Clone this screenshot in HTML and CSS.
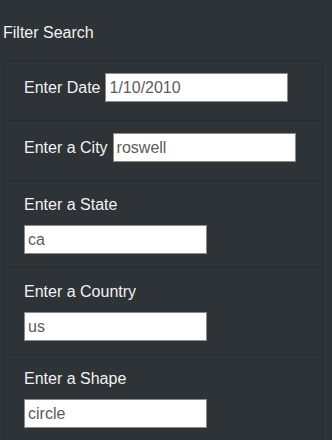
FILE: index.html
```html
<!DOCTYPE html>
<html lang="en">
<head>
<meta charset="utf-8">
<title>Filter Search</title>
<link rel="stylesheet" href="styles.css">
</head>
<body>
<div class="panel">
  <div class="title">Filter Search</div>
  <ul class="filters">
    <li class="item inline">
      <label class="label" for="date">Enter Date</label>
      <input class="field" id="date" type="text" value="1/10/2010">
    </li>
    <li class="item inline">
      <label class="label" for="city">Enter a City</label>
      <input class="field" id="city" type="text" value="roswell">
    </li>
    <li class="item stacked">
      <label class="label" for="state">Enter a State</label>
      <input class="field" id="state" type="text" value="ca">
    </li>
    <li class="item stacked">
      <label class="label" for="country">Enter a Country</label>
      <input class="field" id="country" type="text" value="us">
    </li>
    <li class="item stacked">
      <label class="label" for="shape">Enter a Shape</label>
      <input class="field" id="shape" type="text" value="circle">
    </li>
  </ul>
</div>
</body>
</html>
```

FILE: styles.css
```css
html, body {
  margin: 0;
  padding: 0;
  background: #2e3337;
}

body {
  font-family: "Liberation Sans", Arial, sans-serif;
  font-size: 16px;
  line-height: 24px;
  color: #f2f2f2;
}

.panel {
  padding: 21px 9px 0 3px;
}

.title {
  margin-bottom: 15px;
}

.filters {
  list-style: none;
  margin: 0;
  padding: 0;
  border: 1px solid #272b2f;
  border-radius: 4px;
}

.item {
  padding: 12px 20px 13px;
  border-top: 1px solid #272b2f;
}

.item:first-child {
  border-top: none;
}

.inline {
  display: flex;
  align-items: baseline;
  gap: 5px;
  padding-bottom: 18px;
}

.stacked .label {
  display: block;
  margin-bottom: 8px;
}

.field {
  box-sizing: border-box;
  width: 183px;
  height: 29px;
  margin: 0;
  padding: 1px 3px;
  border: 1px solid #8a8a8a;
  border-radius: 0;
  background: #fff;
  color: #5c5c5c;
  font-family: "Liberation Sans", Arial, sans-serif;
  font-size: 16px;
  outline: none;
}

.stacked .field {
  display: block;
}
```
